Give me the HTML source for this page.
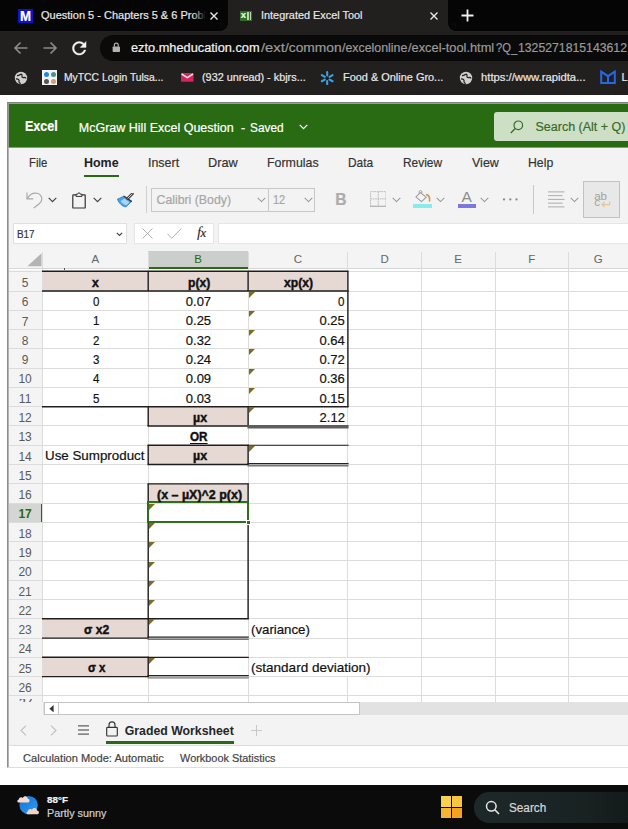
<!DOCTYPE html><html><head><meta charset="utf-8"><title>Integrated Excel Tool</title><style>
*{box-sizing:border-box;margin:0;padding:0}
html,body{width:628px;height:829px;overflow:hidden;background:#fff}
body{position:relative;font-family:"Liberation Sans",sans-serif;}
.abs{position:absolute}
.t{position:absolute;white-space:nowrap;line-height:1}
#tabbar{left:0;top:0;width:628px;height:31px;background:#060505}
#toolbar{left:0;top:30.7px;width:628px;height:64px;background:#221f1f}
.tabact{left:228.3px;top:-8px;width:219.7px;height:40px;background:#221f1f;border-radius:8px 8px 0 0}
.btxt{color:#e8e8e8;font-size:11.5px}
.t{-webkit-text-stroke:0.2px currentColor}
#urlpill{left:100px;top:35px;width:560px;height:26px;border-radius:13px;background:#0a0a0a}
#xlborder{left:7.1px;top:102.1px;width:630px;height:665.5px;border:1.5px solid #808080;background:#fff}
#green{left:8.6px;top:103.5px;width:620px;height:43.6px;background:#296b13}
#ribbon{left:9px;top:147.5px;width:620px;height:71px;background:#f3f3f3;border-bottom:1px solid #dcdcdc}
#fbar{left:9px;top:218px;width:620px;height:31px;background:#f3f3f3}
.menu{font-size:12.5px;color:#333;top:157px}
.cell{position:absolute;font-size:13.5px;color:#111;line-height:1;white-space:nowrap}
.gl{position:absolute;background:#dcdcdc}
.rn{position:absolute;font-size:12px;color:#5a5a5a;text-align:center;width:33px;left:8.6px;line-height:1}
.ch{position:absolute;font-size:11.5px;color:#666;text-align:center;line-height:1;top:254.3px}
.pink{position:absolute;background:#e6d9d3}
.bl{position:absolute;background:#222}
.tri{position:absolute;width:0;height:0;border-top:6.8px solid #7d6d22;border-right:6.8px solid transparent}
#taskbar{left:0;top:784.6px;width:628px;height:45px;background:#0b0b0b}
</style></head><body>
<div class="abs" id="tabbar"></div>
<div class="abs tabact"></div>
<div class="abs" style="left:220.3px;top:23px;width:8px;height:8px;background:radial-gradient(circle at 0 0,#0b0b0b 0,#060505 7.6px,#221f1f 8.2px)"></div>
<div class="abs" style="left:448px;top:23px;width:8px;height:8px;background:radial-gradient(circle at 100% 0,#0b0b0b 0,#060505 7.6px,#221f1f 8.2px)"></div>
<div class="abs" id="toolbar"></div>
<div class="abs" style="left:18.2px;top:8.8px;width:15px;height:13.8px;background:#1212c4"></div>
<div class="t" style="left:19.9px;top:8.7px;font-size:14px;font-weight:bold;color:#fff;transform:scaleX(0.95);transform-origin:0 0">M</div>
<div class="t" style="left:40.70px;top:10.00px;font-size:11.4px;color:#e8e8e8;transform:scaleX(0.9659);transform-origin:0 0;width:169.5px;overflow:hidden;">Question 5 - Chapters 5 &amp; 6 Problems</div>
<div class="abs" style="left:193px;top:6px;width:13px;height:20px;background:linear-gradient(90deg,rgba(6,5,5,0),#060505)"></div>
<svg class="abs" style="left:209.5px;top:12px" width="8" height="8" viewBox="0 0 8 8"><path d="M0.5 0.5L7.5 7.5M7.5 0.5L0.5 7.5" stroke="#e8e8e8" stroke-width="1.4" fill="none"/></svg>
<div class="abs" style="left:239.7px;top:10.7px;width:12.5px;height:10px;background:#2e6e25"></div>
<div class="t" style="left:240.7px;top:10.2px;font-size:9.5px;font-weight:bold;color:#f0f0f0">x</div>
<div class="abs" style="left:247px;top:11.7px;width:4.2px;height:8px;background:#b8d8b0"></div>
<div class="abs" style="left:248.8px;top:11.7px;width:0.8px;height:8px;background:#2e6e25"></div>
<div class="t" style="left:260.70px;top:10.00px;font-size:11.4px;color:#e8e8e8;transform:scaleX(0.9553);transform-origin:0 0;">Integrated Excel Tool</div>
<svg class="abs" style="left:430px;top:12px" width="8" height="8" viewBox="0 0 8 8"><path d="M0.5 0.5L7.5 7.5M7.5 0.5L0.5 7.5" stroke="#e8e8e8" stroke-width="1.4" fill="none"/></svg>
<svg class="abs" style="left:461px;top:9px" width="13" height="13" viewBox="0 0 13 13"><path d="M6.5 0.5V12.5M0.5 6.5H12.5" stroke="#f0f0f0" stroke-width="1.8" fill="none"/></svg>
<svg class="abs" style="left:13px;top:40px" width="16" height="16" viewBox="0 0 16 16"><path d="M14.5 8H2.5M7.5 2.5L2 8L7.5 13.5" stroke="#8a8a8a" stroke-width="1.7" fill="none"/></svg>
<svg class="abs" style="left:42px;top:40px" width="16" height="16" viewBox="0 0 16 16"><path d="M1.5 8H13.5M8.5 2.5L14 8L8.5 13.5" stroke="#8a8a8a" stroke-width="1.7" fill="none"/></svg>
<svg class="abs" style="left:69.2px;top:38.1px" width="20.5" height="20.5" viewBox="0 0 24 24"><path d="M17.65 6.35C16.2 4.9 14.21 4 12 4c-4.42 0-7.99 3.58-7.99 8s3.57 8 7.99 8c3.73 0 6.84-2.55 7.73-6h-2.08c-.82 2.33-3.04 4-5.65 4-3.31 0-6-2.69-6-6s2.69-6 6-6c1.66 0 3.14.69 4.22 1.78L13 11h7V4l-2.35 2.35z" fill="#f4f4f4" stroke="#f4f4f4" stroke-width="0.4"/></svg>
<div class="abs" id="urlpill"></div>
<svg class="abs" style="left:111.7px;top:42.4px" width="8.6" height="10.4" viewBox="0 0 11 13"><rect x="0.8" y="5.5" width="9.4" height="7.2" rx="1" fill="#b6b2b0"/><path d="M3 6V3.8A2.5 2.5 0 0 1 8 3.8V6" stroke="#b6b2b0" stroke-width="1.5" fill="none"/></svg>
<div class="t" style="left:131.20px;top:42.00px;font-size:12.5px;color:#f2f2f2;transform:scaleX(1.0219);transform-origin:0 0;">ezto.mheducation.com</div>
<div class="t" style="left:260.50px;top:42.00px;font-size:12.5px;color:#9a9a9a;transform:scaleX(1.1826);transform-origin:0 0;">/ext</div>
<div class="t" style="left:285.00px;top:42.00px;font-size:12.5px;color:#9a9a9a;transform:scaleX(1.1017);transform-origin:0 0;">/common</div>
<div class="t" style="left:342.40px;top:42.00px;font-size:12.5px;color:#9a9a9a;transform:scaleX(0.9894);transform-origin:0 0;">/excelonline</div>
<div class="t" style="left:408.30px;top:42.00px;font-size:12.5px;color:#9a9a9a;transform:scaleX(1.0254);transform-origin:0 0;">/excel-tool.html</div>
<div class="t" style="left:495.50px;top:42.00px;font-size:12.5px;color:#9a9a9a;transform:scaleX(0.8945);transform-origin:0 0;">?Q_</div>
<div class="t" style="left:518.30px;top:42.00px;font-size:12.5px;color:#9a9a9a;transform:scaleX(0.9798);transform-origin:0 0;">1325271815143612</div>
<svg class="abs" style="left:13.5px;top:70.8px" width="14" height="14" viewBox="0 0 14 14"><circle cx="7" cy="7" r="6.2" fill="#d0d0d0"/><path d="M3 4.5C5 5 6 3 7.5 3.2C9 4 7 6 8.5 6.5C10 7 11.5 5.5 12 7.5M2 8C4 7.5 5.5 9 5 10.5C4.8 11.5 6 12 6.5 12.8" stroke="#232323" stroke-width="1.3" fill="none"/></svg>
<div class="abs" style="left:42px;top:70px;width:15px;height:15px;background:#f4f4f4"></div>
<div class="abs" style="left:44px;top:72px;width:5px;height:5px;border-radius:50%;background:#1e88e5"></div>
<div class="abs" style="left:51px;top:72px;width:5px;height:5px;border-radius:50%;background:#4a8f93"></div>
<div class="abs" style="left:44px;top:79px;width:5px;height:5px;border-radius:50%;background:#555"></div>
<div class="abs" style="left:51px;top:79px;width:5px;height:5px;border-radius:50%;background:#d99a78"></div>
<div class="t" style="left:64.40px;top:72.30px;font-size:11px;color:#e8e8e8;transform:scaleX(0.9398);transform-origin:0 0;">MyTCC Login Tulsa...</div>
<svg class="abs" style="left:181px;top:73.3px" width="12.6" height="8.8" viewBox="0 0 12.6 8.8"><rect x="0" y="0" width="12.6" height="8.8" rx="0.8" fill="#d4255c"/><path d="M0.6 1L6.3 4.6L12 1" stroke="#fbe0e8" stroke-width="1.5" fill="none"/></svg>
<div class="t" style="left:201.50px;top:72.30px;font-size:11px;color:#e8e8e8;transform:scaleX(0.9861);transform-origin:0 0;">(932 unread) - kbjrs...</div>
<svg class="abs" style="left:320.2px;top:70.6px" width="14.4" height="14.4" viewBox="0 0 16 16"><path d="M8.00 4.90L8.00 1.20M10.68 6.45L13.89 4.60M10.68 9.55L13.89 11.40M8.00 11.10L8.00 14.80M5.32 9.55L2.11 11.40M5.32 6.45L2.11 4.60" stroke="#3aa2ea" stroke-width="2.3" stroke-linecap="round" fill="none"/></svg>
<div class="t" style="left:342.50px;top:72.30px;font-size:11px;color:#e8e8e8;transform:scaleX(0.9934);transform-origin:0 0;">Food &amp; Online Gro...</div>
<svg class="abs" style="left:458.6px;top:70.8px" width="14" height="14" viewBox="0 0 14 14"><circle cx="7" cy="7" r="6.2" fill="#d0d0d0"/><path d="M3 4.5C5 5 6 3 7.5 3.2C9 4 7 6 8.5 6.5C10 7 11.5 5.5 12 7.5M2 8C4 7.5 5.5 9 5 10.5C4.8 11.5 6 12 6.5 12.8" stroke="#232323" stroke-width="1.3" fill="none"/></svg>
<div class="t" style="left:480.50px;top:72.30px;font-size:11px;color:#e8e8e8;transform:scaleX(1.0237);transform-origin:0 0;">https://www.rapidta...</div>
<svg class="abs" style="left:599.6px;top:70.4px" width="16" height="14.2" viewBox="0 0 16 14.2"><path d="M1.2 13V1.6L8 6.2L14.8 1.6V13Z M8 6.2V13" stroke="#2468e8" stroke-width="2" fill="none" stroke-linejoin="miter"/></svg>
<div class="t btxt" style="left:621.5px;top:72.3px;font-size:11px">L</div>
<div class="abs" style="left:8px;top:103px;width:620px;height:665px;background:#fff"></div>
<svg class="abs" style="left:0;top:0" width="628" height="829" viewBox="0 0 628 829"><rect x="8.6" y="103.6" width="620" height="44" fill="#296b13"/><path d="M7.85 767.6V102.85H629" stroke="#808080" stroke-width="1.5" fill="none"/></svg>
<div class="t" style="left:24.50px;top:120.40px;font-size:13.8px;color:#fff;transform:scaleX(0.9089);transform-origin:0 0;font-weight:bold;">Excel</div>
<div class="t" style="left:78.80px;top:121.50px;font-size:12.5px;color:#fff;">McGraw Hill Excel Question</div>
<div class="t" style="left:241px;top:121.5px;font-size:12.5px;color:#fff">-</div>
<div class="t" style="left:250.40px;top:121.50px;font-size:12.5px;color:#fff;transform:scaleX(0.9481);transform-origin:0 0;">Saved</div>
<svg class="abs" style="left:299px;top:124px" width="9" height="6" viewBox="0 0 9 6"><path d="M0.7 0.8L4.5 4.6L8.3 0.8" stroke="#fff" stroke-width="1.2" fill="none"/></svg>
<div class="abs" style="left:494px;top:111.5px;width:140px;height:29px;background:#cde0c6;border-radius:3px"></div>
<svg class="abs" style="left:510px;top:119.5px" width="14" height="14" viewBox="0 0 14 14"><circle cx="8.3" cy="5.3" r="4.3" stroke="#3a6a2a" stroke-width="1.2" fill="none"/><path d="M5.2 8.5L0.8 13" stroke="#3a6a2a" stroke-width="1.3"/></svg>
<div class="t" style="left:535.50px;top:120.60px;font-size:12.5px;color:#3a6a2a;">Search (Alt + Q)</div>
<div class="abs" id="ribbon"></div>
<div class="t" style="left:29.40px;top:157.10px;font-size:12.9px;color:#333;transform:scaleX(0.8763);transform-origin:0 0;">File</div>
<div class="t" style="left:84.10px;top:157.10px;font-size:12.9px;color:#222;transform:scaleX(0.9648);transform-origin:0 0;font-weight:bold;-webkit-text-stroke:0;">Home</div>
<div class="t" style="left:147.80px;top:157.10px;font-size:12.9px;color:#333;transform:scaleX(0.9643);transform-origin:0 0;">Insert</div>
<div class="t" style="left:208.30px;top:157.10px;font-size:12.9px;color:#333;transform:scaleX(0.9860);transform-origin:0 0;">Draw</div>
<div class="t" style="left:266.80px;top:157.10px;font-size:12.9px;color:#333;transform:scaleX(0.9611);transform-origin:0 0;">Formulas</div>
<div class="t" style="left:348.00px;top:157.10px;font-size:12.9px;color:#333;transform:scaleX(0.9236);transform-origin:0 0;">Data</div>
<div class="t" style="left:403.20px;top:157.10px;font-size:12.9px;color:#333;transform:scaleX(0.9241);transform-origin:0 0;">Review</div>
<div class="t" style="left:471.50px;top:157.10px;font-size:12.9px;color:#333;transform:scaleX(0.9699);transform-origin:0 0;">View</div>
<div class="t" style="left:527.50px;top:157.10px;font-size:12.9px;color:#333;transform:scaleX(0.9506);transform-origin:0 0;">Help</div>
<div class="abs" style="left:84px;top:174.8px;width:35px;height:2.4px;background:#2a6a16"></div>
<svg class="abs" style="left:26.4px;top:191.5px" width="17" height="17" viewBox="0 0 17 17"><path d="M1 0.6V6.8H7.2" stroke="#a8a8a8" stroke-width="1.15" fill="none"/><path d="M1.3 6.6C3.5 2.6 7.5 0.6 11.2 1.3C15.4 2.2 17 6.6 14.8 9.8C13.2 12.2 10.2 14.2 7.6 16" stroke="#a8a8a8" stroke-width="1.15" fill="none"/></svg>
<svg class="abs" style="left:48px;top:197px" width="9" height="6" viewBox="0 0 9 6"><path d="M0.7 0.8L4.5 4.6L8.3 0.8" stroke="#444" stroke-width="1.2" fill="none"/></svg>
<svg class="abs" style="left:72.3px;top:191.8px" width="14" height="17" viewBox="0 0 14 17"><rect x="0.8" y="2.8" width="12.4" height="13.2" rx="0.6" stroke="#333" stroke-width="1.2" fill="none"/><path d="M4 4.4V2.2H5.6C5.8 0.4 8.2 0.4 8.4 2.2H10V4.4Z" fill="#f3f3f3" stroke="#333" stroke-width="1"/></svg>
<svg class="abs" style="left:93px;top:197px" width="9" height="6" viewBox="0 0 9 6"><path d="M0.7 0.8L4.5 4.6L8.3 0.8" stroke="#444" stroke-width="1.2" fill="none"/></svg>
<svg class="abs" style="left:117px;top:192.6px" width="17" height="15" viewBox="0 0 17 15"><path d="M0.4 6.2L7 3.2L14.6 8.4L9 13.8C5.5 13.6 2.2 10.6 0.4 6.2Z" fill="#49a3ea" stroke="#2a7fd0" stroke-width="0.9"/><path d="M3.5 8.2C5.5 10.5 7.5 11.8 9.6 12.2L12.4 9.2L7.4 5.6Z" fill="#a8d6f8"/><path d="M6.6 3L14.8 8.6" stroke="#3a3a3a" stroke-width="1.3"/><path d="M10.6 5.4L15.4 0.8" stroke="#3a3a3a" stroke-width="2.8" stroke-linecap="round"/><path d="M10.9 5.1L15.2 1" stroke="#f3f3f3" stroke-width="0.9" stroke-linecap="round"/></svg>
<div class="abs" style="left:146px;top:186px;width:1px;height:27px;background:#d0d0d0"></div>
<div class="abs" style="left:151px;top:187.7px;width:118px;height:24.5px;border:1px solid #c8c8c8;background:#f3f3f3"></div>
<div class="t" style="left:156.50px;top:194.30px;font-size:12.3px;color:#a6a6a6;">Calibri (Body)</div>
<svg class="abs" style="left:256.5px;top:197px" width="9" height="6" viewBox="0 0 9 6"><path d="M0.7 0.8L4.5 4.6L8.3 0.8" stroke="#999" stroke-width="1.05" fill="none"/></svg>
<div class="abs" style="left:268px;top:187.7px;width:47.3px;height:24.5px;border:1px solid #c8c8c8;background:#f3f3f3"></div>
<div class="t" style="left:273.20px;top:194.30px;font-size:12.3px;color:#a6a6a6;transform:scaleX(0.8936);transform-origin:0 0;">12</div>
<svg class="abs" style="left:303.5px;top:197px" width="9" height="6" viewBox="0 0 9 6"><path d="M0.7 0.8L4.5 4.6L8.3 0.8" stroke="#999" stroke-width="1.05" fill="none"/></svg>
<div class="t" style="left:335.2px;top:191.6px;font-size:15.6px;font-weight:bold;color:#acacac">B</div>
<svg class="abs" style="left:369.8px;top:190.8px" width="16.6" height="16" viewBox="0 0 16.6 16"><path d="M0.6 15.2V0.6H16V15.2M8.3 0.6V15.2M0.6 7.9H16" stroke="#bcbcbc" stroke-width="1" fill="none" stroke-dasharray="1.6 0.7"/><path d="M0 15.3H16.6" stroke="#b0b0b0" stroke-width="1.2"/></svg>
<svg class="abs" style="left:392px;top:197px" width="9" height="6" viewBox="0 0 9 6"><path d="M0.7 0.8L4.5 4.6L8.3 0.8" stroke="#999" stroke-width="1.05" fill="none"/></svg>
<svg class="abs" style="left:415.4px;top:190.4px" width="17" height="13" viewBox="0 0 17 13"><path d="M5.6 2.6L11.2 7.4L6.4 11.6L0.9 6.9Z" stroke="#9c9c9c" stroke-width="1.1" fill="none" stroke-linejoin="round"/><path d="M4.2 3.6V1.6C4.2 0.2 6.8 0.2 6.8 1.6V3.4" stroke="#9c9c9c" stroke-width="1" fill="none"/><path d="M11.6 4.6C13.8 5.4 15 7.6 14.6 11" stroke="#cf9a5c" stroke-width="1.7" fill="none" stroke-linecap="round"/></svg>
<div class="abs" style="left:413.3px;top:203.8px;width:18.6px;height:4.4px;background:#86ecec"></div>
<svg class="abs" style="left:436px;top:197px" width="9" height="6" viewBox="0 0 9 6"><path d="M0.7 0.8L4.5 4.6L8.3 0.8" stroke="#999" stroke-width="1.05" fill="none"/></svg>
<div class="t" style="left:461.6px;top:189.2px;font-size:15.5px;color:#8e8e8e;-webkit-text-stroke:0">A</div>
<div class="abs" style="left:457.6px;top:203.8px;width:18.6px;height:4.4px;background:#7a78e0"></div>
<svg class="abs" style="left:480px;top:197px" width="9" height="6" viewBox="0 0 9 6"><path d="M0.7 0.8L4.5 4.6L8.3 0.8" stroke="#999" stroke-width="1.05" fill="none"/></svg>
<svg class="abs" style="left:502px;top:197px" width="17" height="5" viewBox="0 0 17 5"><circle cx="2" cy="2.4" r="1.15" fill="#8c8c8c"/><circle cx="8.3" cy="2.4" r="1.15" fill="#8c8c8c"/><circle cx="14.5" cy="2.4" r="1.15" fill="#8c8c8c"/></svg>
<div class="abs" style="left:533px;top:185px;width:1px;height:29px;background:#c8c8c8"></div>
<svg class="abs" style="left:547.7px;top:191px" width="18" height="17" viewBox="0 0 18 17"><path d="M0 0.9H16.5M0 4.65H14.6M0 8.4H16.5M0 12.15H14.6M0 15.9H16.5" stroke="#acacac" stroke-width="1"/></svg>
<svg class="abs" style="left:570px;top:197px" width="9" height="6" viewBox="0 0 9 6"><path d="M0.7 0.8L4.5 4.6L8.3 0.8" stroke="#999" stroke-width="1.05" fill="none"/></svg>
<div class="abs" style="left:583.3px;top:181.3px;width:36.4px;height:36.4px;border:1px solid #c2c2c2;background:#e8e8e8"></div>
<div class="t" style="left:594.2px;top:191px;font-size:11.5px;color:#a2a2a2;-webkit-text-stroke:0">ab</div>
<div class="t" style="left:594.2px;top:197.4px;font-size:11.5px;color:#a2a2a2;-webkit-text-stroke:0">c</div>
<svg class="abs" style="left:601.4px;top:200.6px" width="9.4" height="7" viewBox="0 0 9.4 7"><path d="M8.6 0.3V3.6H1.4M3.6 1L1 3.6L3.6 6.2" stroke="#e2c88e" stroke-width="1.1" fill="none"/></svg>
<div class="abs" id="fbar"></div>
<div class="abs" style="left:13px;top:223px;width:114px;height:21px;background:#fff;border:1px solid #e0e0e0"></div>
<div class="t" style="left:17.30px;top:228.20px;font-size:11.6px;color:#333;transform:scaleX(0.8524);transform-origin:0 0;">B17</div>
<svg class="abs" style="left:116px;top:232px" width="7" height="5" viewBox="0 0 7 5"><path d="M0.8 0.8L3.5 3.5L6.2 0.8" stroke="#444" stroke-width="1.2" fill="none"/></svg>
<div class="abs" style="left:134px;top:223px;width:80px;height:21px;background:#fff;border:1px solid #e6e6e6"></div>
<svg class="abs" style="left:142px;top:228px" width="11" height="11" viewBox="0 0 11 11"><path d="M0.5 0.5L10.5 10.5M10.5 0.5L0.5 10.5" stroke="#b0b0b0" stroke-width="1" fill="none"/></svg>
<svg class="abs" style="left:167.4px;top:228.4px" width="15" height="11" viewBox="0 0 15 11"><path d="M0.5 6L4.8 10.2L14.3 0.5" stroke="#b0b0b0" stroke-width="1" fill="none"/></svg>
<div class="t" style="left:197px;top:225px;font-size:15px;font-style:italic;color:#2a2a2a;-webkit-text-stroke:0;font-family:'Liberation Serif',serif">f<span style="font-size:12.5px;margin-left:-0.8px;-webkit-text-stroke:0.2px #2a2a2a">x</span></div>
<div class="abs" style="left:218px;top:223px;width:420px;height:21px;background:#fff;border:1px solid #e6e6e6"></div>
<div class="abs" style="left:9px;top:249px;width:620px;height:455px;background:#fff"></div>
<div class="abs" style="left:9px;top:249px;width:620px;height:19.6px;background:#f4f4f4;border-bottom:1px solid #d6d6d6"></div>
<div class="abs" style="left:63.6px;top:268.4px;width:1.6px;height:1.6px;background:#555"></div>
<div class="abs" style="left:148.2px;top:251.3px;width:99.9px;height:17px;background:#cbcfcc"></div>
<div class="abs" style="left:148.2px;top:267px;width:99.9px;height:1.5px;background:#2a6a16"></div>
<svg class="abs" style="left:26.6px;top:252.6px" width="15" height="14" viewBox="0 0 15 14"><path d="M14.5 0.3V13.3H0.3Z" fill="#b4b4b4"/></svg>
<div class="ch" style="left:42.7px;width:105.5px;">A</div>
<div class="ch" style="left:148.2px;width:99.9px;color:#2a6a16;">B</div>
<div class="ch" style="left:248.1px;width:99.8px;">C</div>
<div class="ch" style="left:347.9px;width:73.4px;">D</div>
<div class="ch" style="left:421.3px;width:73.7px;">E</div>
<div class="ch" style="left:495px;width:73.5px;">F</div>
<div class="ch" style="left:568.5px;width:59.5px;">G</div>
<div class="abs" style="left:9px;top:269.5px;width:33.7px;height:435px;background:#f4f4f4"></div>
<div class="abs" style="left:9px;top:503.11px;width:33.7px;height:19.28px;background:#d3d6d3"></div>
<div class="abs" style="left:41.4px;top:503.11px;width:1.8px;height:19.28px;background:#2a6a16"></div>
<div class="gl" style="left:9px;top:271.25px;width:620px;height:1px"></div>
<div class="gl" style="left:9px;top:290.53px;width:620px;height:1px"></div>
<div class="gl" style="left:9px;top:309.81px;width:620px;height:1px"></div>
<div class="gl" style="left:9px;top:329.09px;width:620px;height:1px"></div>
<div class="gl" style="left:9px;top:348.37px;width:620px;height:1px"></div>
<div class="gl" style="left:9px;top:367.65px;width:620px;height:1px"></div>
<div class="gl" style="left:9px;top:386.93px;width:620px;height:1px"></div>
<div class="gl" style="left:9px;top:406.21px;width:620px;height:1px"></div>
<div class="gl" style="left:9px;top:425.49px;width:620px;height:1px"></div>
<div class="gl" style="left:9px;top:444.77px;width:620px;height:1px"></div>
<div class="gl" style="left:9px;top:464.05px;width:620px;height:1px"></div>
<div class="gl" style="left:9px;top:483.33px;width:620px;height:1px"></div>
<div class="gl" style="left:9px;top:502.61px;width:620px;height:1px"></div>
<div class="gl" style="left:9px;top:521.89px;width:620px;height:1px"></div>
<div class="gl" style="left:9px;top:541.17px;width:620px;height:1px"></div>
<div class="gl" style="left:9px;top:560.45px;width:620px;height:1px"></div>
<div class="gl" style="left:9px;top:579.73px;width:620px;height:1px"></div>
<div class="gl" style="left:9px;top:599.01px;width:620px;height:1px"></div>
<div class="gl" style="left:9px;top:618.29px;width:620px;height:1px"></div>
<div class="gl" style="left:9px;top:637.57px;width:620px;height:1px"></div>
<div class="gl" style="left:9px;top:656.85px;width:620px;height:1px"></div>
<div class="gl" style="left:9px;top:676.13px;width:620px;height:1px"></div>
<div class="gl" style="left:9px;top:695.41px;width:620px;height:1px"></div>
<div class="gl" style="left:42.2px;top:251.5px;width:1px;height:452px"></div>
<div class="gl" style="left:147.7px;top:251.5px;width:1px;height:452px"></div>
<div class="gl" style="left:247.6px;top:251.5px;width:1px;height:452px"></div>
<div class="gl" style="left:347.4px;top:251.5px;width:1px;height:452px"></div>
<div class="gl" style="left:420.8px;top:251.5px;width:1px;height:452px"></div>
<div class="gl" style="left:494.5px;top:251.5px;width:1px;height:452px"></div>
<div class="gl" style="left:568px;top:251.5px;width:1px;height:452px"></div>
<div class="abs" style="left:346.4px;top:657.85px;width:3px;height:18.28px;background:#fff"></div>
<div class="pink" style="left:42.7px;top:271.75px;width:305.2px;height:19.28px"></div>
<div class="pink" style="left:148.2px;top:406.71px;width:99.9px;height:19.28px"></div>
<div class="pink" style="left:148.2px;top:445.27px;width:99.9px;height:19.28px"></div>
<div class="pink" style="left:148.2px;top:483.83px;width:99.9px;height:19.28px"></div>
<div class="pink" style="left:42.7px;top:618.79px;width:105.5px;height:19.28px"></div>
<div class="pink" style="left:42.7px;top:657.35px;width:105.5px;height:19.28px"></div>
<svg class="abs" style="left:0;top:0" width="628" height="829" viewBox="0 0 628 829"><line x1="42.00" y1="271.30" x2="348.60" y2="271.30" stroke="#1e1e1e" stroke-width="1.4"/><line x1="42.00" y1="291.03" x2="348.60" y2="291.03" stroke="#1e1e1e" stroke-width="1.5"/><line x1="148.20" y1="271.75" x2="148.20" y2="291.03" stroke="#1e1e1e" stroke-width="1.4"/><line x1="248.10" y1="271.75" x2="248.10" y2="291.03" stroke="#1e1e1e" stroke-width="1.4"/><line x1="347.90" y1="271.75" x2="347.90" y2="406.71" stroke="#1e1e1e" stroke-width="1.4"/><line x1="42.00" y1="406.71" x2="348.60" y2="406.71" stroke="#1e1e1e" stroke-width="1.5"/><line x1="148.20" y1="406.71" x2="148.20" y2="425.99" stroke="#1e1e1e" stroke-width="1.4"/><line x1="248.10" y1="406.71" x2="248.10" y2="425.99" stroke="#1e1e1e" stroke-width="1.4"/><line x1="147.50" y1="425.99" x2="248.80" y2="425.99" stroke="#1e1e1e" stroke-width="1.4"/><line x1="247.40" y1="426.69" x2="348.60" y2="426.69" stroke="#5e5e5e" stroke-width="3.5"/><line x1="147.50" y1="445.27" x2="248.80" y2="445.27" stroke="#1e1e1e" stroke-width="1.4"/><line x1="147.50" y1="464.55" x2="248.80" y2="464.55" stroke="#1e1e1e" stroke-width="1.4"/><line x1="148.20" y1="445.27" x2="148.20" y2="464.55" stroke="#1e1e1e" stroke-width="1.4"/><line x1="248.10" y1="445.27" x2="248.10" y2="464.55" stroke="#1e1e1e" stroke-width="1.4"/><line x1="247.40" y1="445.27" x2="348.60" y2="445.27" stroke="#1e1e1e" stroke-width="1.2"/><line x1="247.40" y1="463.55" x2="348.60" y2="463.55" stroke="#222" stroke-width="1.3"/><line x1="247.40" y1="465.75" x2="348.60" y2="465.75" stroke="#777" stroke-width="1.4"/><line x1="147.50" y1="483.83" x2="248.80" y2="483.83" stroke="#1e1e1e" stroke-width="1.4"/><line x1="148.20" y1="483.83" x2="148.20" y2="503.11" stroke="#1e1e1e" stroke-width="1.4"/><line x1="148.20" y1="522.39" x2="148.20" y2="638.07" stroke="#1e1e1e" stroke-width="1.4"/><line x1="248.10" y1="483.83" x2="248.10" y2="503.11" stroke="#1e1e1e" stroke-width="1.4"/><line x1="248.10" y1="522.39" x2="248.10" y2="618.79" stroke="#1e1e1e" stroke-width="1.4"/><line x1="147.50" y1="618.79" x2="248.80" y2="618.79" stroke="#1e1e1e" stroke-width="1.4"/><line x1="42.00" y1="618.79" x2="148.90" y2="618.79" stroke="#1e1e1e" stroke-width="1.5"/><line x1="42.00" y1="638.07" x2="148.90" y2="638.07" stroke="#1e1e1e" stroke-width="1.2"/><line x1="147.50" y1="637.07" x2="248.80" y2="637.07" stroke="#222" stroke-width="1.3"/><line x1="147.50" y1="639.27" x2="248.80" y2="639.27" stroke="#777" stroke-width="1.4"/><line x1="42.00" y1="657.35" x2="148.90" y2="657.35" stroke="#1e1e1e" stroke-width="1.5"/><line x1="42.00" y1="676.63" x2="148.90" y2="676.63" stroke="#1e1e1e" stroke-width="1.2"/><line x1="147.50" y1="657.35" x2="248.80" y2="657.35" stroke="#1e1e1e" stroke-width="1.2"/><line x1="148.20" y1="657.35" x2="148.20" y2="676.63" stroke="#1e1e1e" stroke-width="1.4"/><line x1="147.50" y1="675.63" x2="248.80" y2="675.63" stroke="#222" stroke-width="1.3"/><line x1="147.50" y1="677.83" x2="248.80" y2="677.83" stroke="#777" stroke-width="1.4"/></svg>
<div class="abs" style="left:147.3px;top:501px;width:102.2px;height:21.6px;border:2px solid #2f6f1c"></div>
<div class="abs" style="left:245.9px;top:519.99px;width:5.4px;height:5.4px;background:#2f6f1c;border:1px solid #fff"></div>
<div class="tri" style="left:248.5px;top:291.63px"></div>
<div class="tri" style="left:248.5px;top:310.91px"></div>
<div class="tri" style="left:248.5px;top:330.19px"></div>
<div class="tri" style="left:248.5px;top:349.47px"></div>
<div class="tri" style="left:248.5px;top:368.75px"></div>
<div class="tri" style="left:248.5px;top:388.03px"></div>
<div class="tri" style="left:248.5px;top:407.31px"></div>
<div class="tri" style="left:248.5px;top:445.87px"></div>
<div class="tri" style="left:148.6px;top:503.71px"></div>
<div class="tri" style="left:148.6px;top:522.99px"></div>
<div class="tri" style="left:148.6px;top:542.27px"></div>
<div class="tri" style="left:148.6px;top:561.55px"></div>
<div class="tri" style="left:148.6px;top:580.83px"></div>
<div class="tri" style="left:148.6px;top:600.11px"></div>
<div class="tri" style="left:148.6px;top:619.39px"></div>
<div class="tri" style="left:148.6px;top:657.95px"></div>
<div class="rn" style="top:277.05px;">5</div>
<div class="rn" style="top:296.33px;">6</div>
<div class="rn" style="top:315.61px;">7</div>
<div class="rn" style="top:334.89px;">8</div>
<div class="rn" style="top:354.17px;">9</div>
<div class="rn" style="top:373.45px;">10</div>
<div class="rn" style="top:392.73px;">11</div>
<div class="rn" style="top:412.01px;">12</div>
<div class="rn" style="top:431.29px;">13</div>
<div class="rn" style="top:450.57px;">14</div>
<div class="rn" style="top:469.85px;">15</div>
<div class="rn" style="top:489.13px;">16</div>
<div class="rn" style="top:508.41px;color:#2a6a16;font-weight:bold;">17</div>
<div class="rn" style="top:527.69px;">18</div>
<div class="rn" style="top:546.97px;">19</div>
<div class="rn" style="top:566.25px;">20</div>
<div class="rn" style="top:585.53px;">21</div>
<div class="rn" style="top:604.81px;">22</div>
<div class="rn" style="top:624.09px;">23</div>
<div class="rn" style="top:643.37px;">24</div>
<div class="rn" style="top:662.65px;">25</div>
<div class="rn" style="top:681.93px;">26</div>
<div class="t" style="left:92.20px;top:275.79px;font-size:13.2px;color:#111;transform:scaleX(0.9282);transform-origin:0 0;font-weight:bold;-webkit-text-stroke:0.45px #111;">x</div>
<div class="t" style="left:187.70px;top:275.79px;font-size:13.2px;color:#111;transform:scaleX(0.9207);transform-origin:0 0;font-weight:bold;-webkit-text-stroke:0.45px #111;">p(x)</div>
<div class="t" style="left:283.60px;top:275.79px;font-size:13.2px;color:#111;transform:scaleX(0.9192);transform-origin:0 0;font-weight:bold;-webkit-text-stroke:0.45px #111;">xp(x)</div>
<div class="t" style="left:92.55px;top:295.17px;font-size:13px;color:#111;transform:scaleX(0.8870);transform-origin:0 0;">0</div>
<div class="t" style="left:185.80px;top:295.17px;font-size:13px;color:#111;">0.07</div>
<div class="t" style="left:338.30px;top:295.17px;font-size:13px;color:#111;transform:scaleX(0.8870);transform-origin:0 0;">0</div>
<div class="t" style="left:92.55px;top:314.45px;font-size:13px;color:#111;transform:scaleX(0.8870);transform-origin:0 0;">1</div>
<div class="t" style="left:185.80px;top:314.45px;font-size:13px;color:#111;">0.25</div>
<div class="t" style="left:319.50px;top:314.45px;font-size:13px;color:#111;">0.25</div>
<div class="t" style="left:92.55px;top:333.73px;font-size:13px;color:#111;transform:scaleX(0.8870);transform-origin:0 0;">2</div>
<div class="t" style="left:185.80px;top:333.73px;font-size:13px;color:#111;">0.32</div>
<div class="t" style="left:319.50px;top:333.73px;font-size:13px;color:#111;">0.64</div>
<div class="t" style="left:92.55px;top:353.01px;font-size:13px;color:#111;transform:scaleX(0.8870);transform-origin:0 0;">3</div>
<div class="t" style="left:185.80px;top:353.01px;font-size:13px;color:#111;">0.24</div>
<div class="t" style="left:319.50px;top:353.01px;font-size:13px;color:#111;">0.72</div>
<div class="t" style="left:92.55px;top:372.29px;font-size:13px;color:#111;transform:scaleX(0.8870);transform-origin:0 0;">4</div>
<div class="t" style="left:185.80px;top:372.29px;font-size:13px;color:#111;">0.09</div>
<div class="t" style="left:319.50px;top:372.29px;font-size:13px;color:#111;">0.36</div>
<div class="t" style="left:92.55px;top:391.57px;font-size:13px;color:#111;transform:scaleX(0.8870);transform-origin:0 0;">5</div>
<div class="t" style="left:185.80px;top:391.57px;font-size:13px;color:#111;">0.03</div>
<div class="t" style="left:319.50px;top:391.57px;font-size:13px;color:#111;">0.15</div>
<div class="t" style="left:192.50px;top:410.75px;font-size:13.2px;color:#111;transform:scaleX(0.9386);transform-origin:0 0;font-weight:bold;-webkit-text-stroke:0.45px #111;">µx</div>
<div class="t" style="left:319.60px;top:410.85px;font-size:13px;color:#111;">2.12</div>
<div class="t" style="left:190.00px;top:430.03px;font-size:13.2px;color:#111;transform:scaleX(0.8889);transform-origin:0 0;font-weight:bold;text-decoration:underline;text-underline-offset:1.6px;text-decoration-thickness:1.3px;-webkit-text-stroke:0.45px #111;">OR</div>
<div class="t" style="left:45.00px;top:449.41px;font-size:13px;color:#111;transform:scaleX(1.0274);transform-origin:0 0;">Use Sumproduct</div>
<div class="t" style="left:192.50px;top:449.31px;font-size:13.2px;color:#111;transform:scaleX(0.9386);transform-origin:0 0;font-weight:bold;-webkit-text-stroke:0.45px #111;">µx</div>
<div class="t" style="left:156.50px;top:487.97px;font-size:13px;color:#111;transform:scaleX(0.9584);transform-origin:0 0;font-weight:bold;-webkit-text-stroke:0.45px #111;">(x – µX)^2 p(x)</div>
<div class="t" style="left:83.80px;top:622.83px;font-size:13.2px;color:#111;transform:scaleX(0.9200);transform-origin:0 0;font-weight:bold;-webkit-text-stroke:0.45px #111;">σ x2</div>
<div class="t" style="left:251.00px;top:622.93px;font-size:13px;color:#111;transform:scaleX(1.0176);transform-origin:0 0;">(variance)</div>
<div class="t" style="left:88.00px;top:661.39px;font-size:13.2px;color:#111;transform:scaleX(0.8722);transform-origin:0 0;font-weight:bold;-webkit-text-stroke:0.45px #111;">σ x</div>
<div class="t" style="left:251.00px;top:661.49px;font-size:13px;color:#111;transform:scaleX(1.0407);transform-origin:0 0;">(standard deviation)</div>
<div class="t" style="left:19px;top:698.6px;font-size:12px;color:#555;height:3.2px;overflow:hidden;line-height:1"><span style="position:relative;top:-1.4px">27</span></div>
<div class="abs" style="left:9px;top:701.5px;width:620px;height:15px;background:#f3f3f3"></div>
<div class="abs" style="left:42.7px;top:702.3px;width:590px;height:12.6px;background:#e2e2e2"></div>
<div class="abs" style="left:43.6px;top:702px;width:15px;height:13.2px;background:#fff;border:1px solid #c4c4c4"></div>
<svg class="abs" style="left:48.6px;top:705px" width="5" height="7.4" viewBox="0 0 5 7.4"><path d="M4.6 0L0.4 3.7L4.6 7.4Z" fill="#333"/></svg>
<div class="abs" style="left:57.6px;top:702px;width:302px;height:13.2px;background:#fff;border:1px solid #c4c4c4"></div>
<div class="abs" style="left:9px;top:716px;width:620px;height:30px;background:#f3f3f3;border-bottom:1px solid #dcdcdc"></div>
<svg class="abs" style="left:20px;top:725px" width="7" height="11" viewBox="0 0 7 11"><path d="M6 0.7L1 5.5L6 10.3" stroke="#c0c0c0" stroke-width="1.1" fill="none"/></svg>
<svg class="abs" style="left:50px;top:725px" width="7" height="11" viewBox="0 0 7 11"><path d="M1 0.7L6 5.5L1 10.3" stroke="#c0c0c0" stroke-width="1.1" fill="none"/></svg>
<svg class="abs" style="left:77.8px;top:725.4px" width="11.6" height="10" viewBox="0 0 11.6 10"><path d="M0 0.9H11.6M0 5H11.6M0 9.1H11.6" stroke="#3a3a3a" stroke-width="1"/></svg>
<svg class="abs" style="left:106.4px;top:721px" width="12" height="16" viewBox="0 0 12 16"><rect x="0.7" y="6.4" width="10.6" height="8.6" rx="0.8" stroke="#333" stroke-width="1.15" fill="none"/><path d="M3 6.4V3.9A3 3 0 0 1 9 3.9V6.4" stroke="#333" stroke-width="1.15" fill="none"/></svg>
<div class="t" style="left:124.70px;top:724.50px;font-size:12.3px;color:#262626;font-weight:bold;-webkit-text-stroke:0;">Graded Worksheet</div>
<div class="abs" style="left:106px;top:741.2px;width:128px;height:3px;background:#2a6a16"></div>
<svg class="abs" style="left:251px;top:724.5px" width="11" height="11" viewBox="0 0 11 11"><path d="M5.5 0V11M0 5.5H11" stroke="#c8c8c8" stroke-width="1"/></svg>
<div class="abs" style="left:9px;top:746px;width:620px;height:21.6px;background:#fff;border-bottom:1px solid #dedede"></div>
<div class="t" style="left:22.50px;top:752.80px;font-size:10.9px;color:#444;transform:scaleX(1.0199);transform-origin:0 0;">Calculation Mode: Automatic</div>
<div class="t" style="left:180.10px;top:752.80px;font-size:10.9px;color:#444;">Workbook Statistics</div>
<div class="abs" style="left:0;top:767.6px;width:628px;height:18px;background:#fff"></div>
<div class="abs" id="taskbar"></div>
<svg class="abs" style="left:16px;top:793px" width="26" height="24" viewBox="0 0 26 24"><defs><linearGradient id="wg" x1="0" y1="0" x2="1" y2="1"><stop offset="0" stop-color="#1a6fd8"/><stop offset="1" stop-color="#2aa0f0"/></linearGradient></defs><circle cx="12.6" cy="12.1" r="9.2" fill="url(#wg)"/><path d="M2.2 9.6C0.9 9.4 1 7 2.8 6.6C3 4.6 5.4 3.6 6.8 5C7.8 2.2 11.6 2.8 11.8 5.8C13.8 5.6 14.2 9.2 12.2 9.6Z" fill="#f6dccc"/><path d="M11.6 21.2C10.2 21 10.2 18.6 12 18.2C12.2 16.2 14.6 15.4 16 16.6C17 14 20.8 14.4 21 17.4C23.2 17.2 23.6 20.8 21.6 21.2Z" fill="#f2d4c2"/></svg>
<div class="t" style="left:46.70px;top:794.70px;font-size:9.4px;color:#f4f4f4;transform:scaleX(1.0513);transform-origin:0 0;font-weight:bold;">88°F</div>
<div class="t" style="left:46.50px;top:809.10px;font-size:10px;color:#cfcfcf;transform:scaleX(1.0790);transform-origin:0 0;">Partly sunny</div>
<div class="abs" style="left:440.8px;top:796.4px;width:10.3px;height:10.3px;background:#f9d24e"></div>
<div class="abs" style="left:452.1px;top:796.4px;width:10.3px;height:10.3px;background:#f7c63e"></div>
<div class="abs" style="left:440.8px;top:807.8px;width:10.3px;height:10.3px;background:#f8b530"></div>
<div class="abs" style="left:452.1px;top:807.8px;width:10.3px;height:10.3px;background:#f3a222"></div>
<div class="abs" style="left:474.4px;top:792px;width:180px;height:30.6px;border-radius:15.3px;background:linear-gradient(90deg,#1d2828 0,#1a2323 55%,#111616 100%)"></div>
<svg class="abs" style="left:484.5px;top:799.6px" width="15" height="15" viewBox="0 0 15 15"><circle cx="6.3" cy="6.3" r="4.8" stroke="#e8e8e8" stroke-width="1.5" fill="none"/><path d="M9.8 9.8L14 14" stroke="#e8e8e8" stroke-width="1.6"/></svg>
<div class="t" style="left:508.60px;top:801.60px;font-size:12px;color:#d8d8d8;transform:scaleX(0.9779);transform-origin:0 0;">Search</div>
</body></html>
